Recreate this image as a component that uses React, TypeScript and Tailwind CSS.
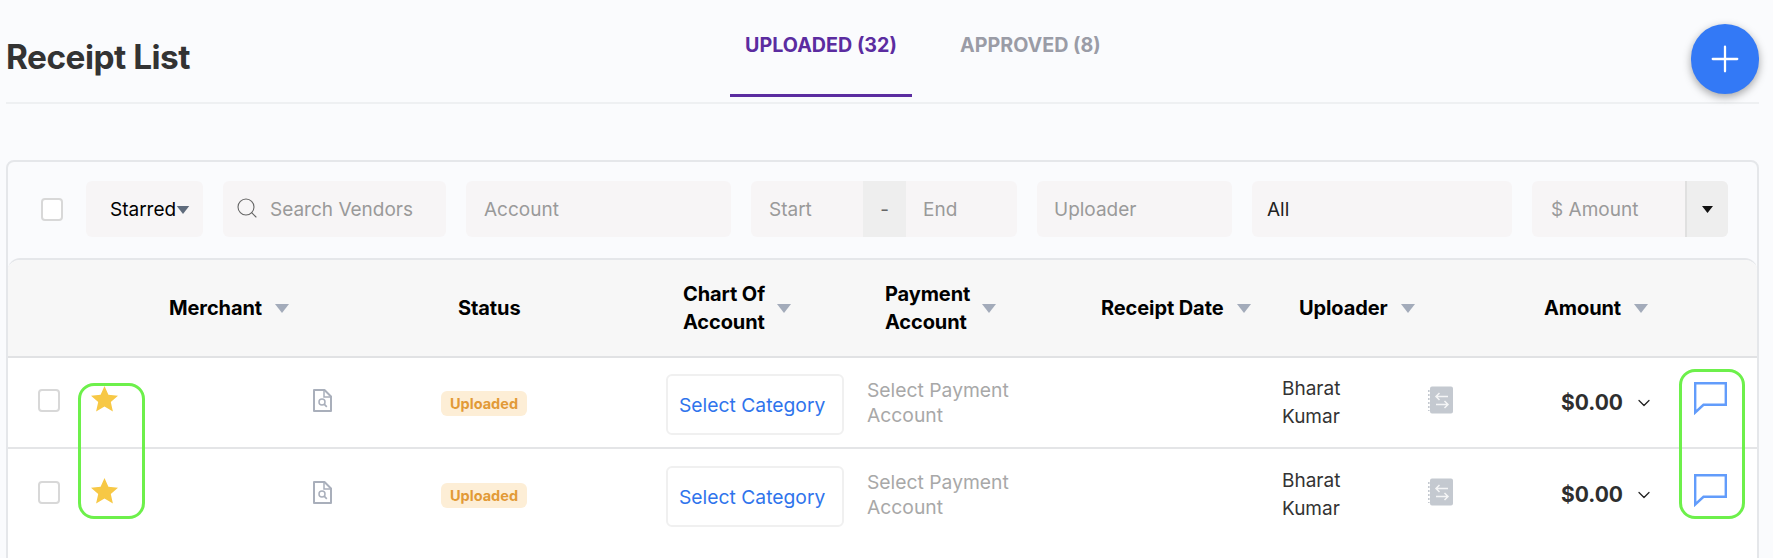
import { ChevronDown, Plus, Search } from "lucide-react";

const COLUMNS =
  "grid grid-cols-[70px_65px_298px_225px_201px_234px_181px_248px_150px_77px]";

function Caret({ className = "", color = "#a3abba" }: { className?: string; color?: string }) {
  return (
    <svg width="14" height="9" viewBox="0 0 14 9" className={className} aria-hidden="true">
      <path d="M0 0h14L7 9z" fill={color} />
    </svg>
  );
}

function Star() {
  return (
    <svg width="27" height="26" viewBox="0 0 27 26" aria-hidden="true">
      <path
        d="M13.5 0l3.9 8.7 9.6 1-7.2 6.3 2.1 9.5-8.4-4.9-8.4 4.9 2.1-9.5L0 9.7l9.6-1z"
        fill="#f7c845"
      />
    </svg>
  );
}

function DocSearch() {
  return (
    <svg width="19" height="23" viewBox="0 0 19 23" fill="none" aria-hidden="true">
      <path d="M1 1h10.5L18 7.5V22H1z" stroke="#a9afbb" strokeWidth="2" strokeLinejoin="round" />
      <path d="M11 1v7h7" stroke="#a9afbb" strokeWidth="1.5" />
      <circle cx="9" cy="13" r="3" stroke="#a9afbb" strokeWidth="1.5" />
      <path d="M11.2 15.2l2.6 2.6" stroke="#a9afbb" strokeWidth="1.7" />
    </svg>
  );
}

function Ledger() {
  return (
    <svg width="25" height="28" viewBox="0 0 25 28" fill="none" aria-hidden="true">
      <path d="M2 2.5A2 2 0 0 1 4 .5h19a2 2 0 0 1 2 2v23a2 2 0 0 1-2 2H4a2 2 0 0 1-2-2z" fill="#c4c9d0" />
      <path
        d="M0.8 4v2M0.8 8v2M0.8 12v2M0.8 16v2M0.8 20v2M0.8 24v1"
        stroke="#c4c9d0"
        strokeWidth="1.6"
      />
      <path
        d="M20 10.500H8M11.500 7L8 10.500l3.500 3.500M8 18.500h12M16.500 15l3.500 3.500-3.500 3.500"
        stroke="#f4f5f6"
        strokeWidth="1.500"
      />
    </svg>
  );
}

function Comment() {
  return (
    <svg width="33" height="33" viewBox="0 0 33 33" fill="none" aria-hidden="true">
      <path d="M1.200 1.200h30.600v21.600H9.500L1.200 30.500z" stroke="#629cfb" strokeWidth="2.400" />
    </svg>
  );
}

function HeaderLabel({ lines }: { lines: string[] }) {
  return (
    <div className="text-[20px] font-bold leading-[28px] tracking-[-0.1px] text-black">
      {lines.map((line) => (
        <div key={line} className="whitespace-nowrap">
          {line}
        </div>
      ))}
    </div>
  );
}

function FilterBox({ className = "", children }: { className?: string; children: React.ReactNode }) {
  return (
    <div className={`flex h-[56px] items-center overflow-hidden rounded-[6px] bg-[#f7f5f6] text-[19px] leading-[30px] ${className}`}>
      {children}
    </div>
  );
}

function ReceiptRow() {
  return (
    <div className={`${COLUMNS} h-[91px] items-center border-b-2 border-[#e4e5e7] bg-white`}>
      <div className="pb-[5px] pl-[30px]">
        <div className="h-[23px] w-[22px] rounded-[4px] border-2 border-[#d8d8d8] bg-white" />
      </div>
      <div className="pb-[8px] pl-[13px]">
        <Star />
      </div>
      <div className="pb-[5px] pl-[170px]">
        <DocSearch />
      </div>
      <div className="pt-[2px]">
        <span className="inline-flex h-[25px] w-[86px] items-center justify-center rounded-[6px] bg-[#fdeed6] text-[14.500px] font-bold text-[#e29a37]">
          Uploaded
        </span>
      </div>
      <div className="pt-[3px]">
        <div className="flex h-[61px] w-[178px] items-center whitespace-nowrap rounded-[6px] border-2 border-[#f0f0f0] bg-white pl-[11px] pt-[2px] text-[19.300px] text-[#2f74ec]">
          Select Category
        </div>
      </div>
      <div className="whitespace-nowrap text-[19.300px] leading-[25px] text-[#a8a8a8]">
        Select Payment
        <br />
        Account
      </div>
      <div />
      <div className="flex items-center">
        <div className="w-[146px] text-[19px] leading-[28px] text-[#333333]">
          Bharat
          <br />
          Kumar
        </div>
        <div className="pb-[5px]">
          <Ledger />
        </div>
      </div>
      <div className="flex items-center pl-[31px] pt-[1px]">
        <span className="text-[21px] font-bold text-[#2e2e2e]">$0.00</span>
        <ChevronDown size={20} strokeWidth={1.5} className="ml-[11px] text-[#222222]" />
      </div>
      <div className="pb-[9px] pl-[14px]">
        <Comment />
      </div>
    </div>
  );
}

export default function App() {
  return (
    <div className="h-[558px] overflow-hidden bg-[#fafbfd] pl-[6px] pr-[14px] font-['Inter',sans-serif]">
      {/* title + tabs */}
      <header className="flex h-[104px] border-b-2 border-[#eef0f2]">
        <h1 className="w-[724px] pt-[38px] text-[33.400px] font-bold leading-[38px] tracking-[-0.5px] text-[#333333]">
          Receipt List
        </h1>
        <div className="flex h-[97px] w-[182px] justify-center border-b-[3px] border-[#5b2ca0] pt-[33px] text-[19.700px] font-bold leading-[24px] text-[#5b2ca0]">
          UPLOADED (32)
        </div>
        <div className="ml-[48px] pt-[33px] text-[19.700px] font-bold leading-[24px] text-[#9a9ca6]">
          APPROVED (8)
        </div>
        <button className="ml-auto mt-[24px] flex h-[70px] w-[68px] items-center justify-center rounded-full bg-[#3379f6] shadow-[0_3px_8px_rgba(0,0,0,0.35)]">
          <Plus size={42} strokeWidth={1.3} className="text-white" />
        </button>
      </header>

      {/* filters + table */}
      <section className="mt-[56px] h-[500px] rounded-t-[8px] border-2 border-[#e5e7ea]">
        <div className="flex items-center gap-[20px] pl-[33px] pt-[19px]">
          <div className="mr-[3px] h-[23px] w-[22px] rounded-[4px] border-2 border-[#d8d8d8] bg-white" />
          <FilterBox className="w-[117px] pl-[24px] pt-[2px] text-black">
            Starred
            <Caret className="h-[8px] w-[14px] shrink-0" color="#5f6b7c" />
          </FilterBox>
          <FilterBox className="w-[223px] pl-[12px] pt-[2px] text-[#9a9a9a]">
            <Search size={24} strokeWidth={1.1} className="mb-[4px] mr-[11px] shrink-0 text-[#666666]" />
            Search Vendors
          </FilterBox>
          <FilterBox className="w-[265px] pl-[18px] pt-[2px] text-[#9a9a9a]">Account</FilterBox>
          <FilterBox className="w-[266px] text-[#9a9a9a]">
            <span className="w-[112px] pl-[18px] pt-[2px]">Start</span>
            <span className="flex h-full w-[43px] items-center justify-center bg-[#eeeeee] pt-[2px] text-[#666666]">-</span>
            <span className="pl-[17px] pt-[2px]">End</span>
          </FilterBox>
          <FilterBox className="w-[195px] pl-[17px] pt-[2px] text-[#9a9a9a]">Uploader</FilterBox>
          <FilterBox className="w-[260px] pl-[15px] pt-[2px] text-[#222222]">All</FilterBox>
          <FilterBox className="w-[196px] pl-[19px] text-[#9a9a9a]">
            <span className="w-[134px] whitespace-nowrap pt-[2px]">$ Amount</span>
            <span className="flex h-full flex-1 items-center justify-center border-l-2 border-[#e0e0e0] bg-[#eeeeee]">
              <svg width="11" height="7" viewBox="0 0 11 7" aria-hidden="true">
                <path d="M0 0h11L5.500 7z" fill="#111111" />
              </svg>
            </span>
          </FilterBox>
        </div>

        <div className="relative mt-[21px] h-[319px] overflow-hidden rounded-t-[12px] border-t-2 border-[#e5e7ea] bg-white">
          <div className={`${COLUMNS} h-[98px] items-center border-b-2 border-[#e1e2e4] bg-[#f7f7f7]`}>
            <div />
            <div />
            <div className="flex items-center gap-[13px] pl-[26px]">
              <HeaderLabel lines={["Merchant"]} />
              <Caret />
            </div>
            <div className="pl-[17px]">
              <HeaderLabel lines={["Status"]} />
            </div>
            <div className="flex items-center gap-[12px] pl-[17px]">
              <HeaderLabel lines={["Chart Of", "Account"]} />
              <Caret />
            </div>
            <div className="flex items-center gap-[12px] pl-[18px]">
              <HeaderLabel lines={["Payment", "Account"]} />
              <Caret />
            </div>
            <div className="flex items-center gap-[14px]">
              <HeaderLabel lines={["Receipt Date"]} />
              <Caret />
            </div>
            <div className="flex items-center gap-[13px] pl-[17px]">
              <HeaderLabel lines={["Uploader"]} />
              <Caret />
            </div>
            <div className="flex items-center gap-[13px] pl-[14px]">
              <HeaderLabel lines={["Amount"]} />
              <Caret />
            </div>
            <div />
          </div>
          <ReceiptRow />
          <div className="[&>div]:border-b-0">
            <ReceiptRow />
          </div>

          {/* green annotation outlines sit over the rows */}
          <div className="absolute left-[70px] top-[123px] h-[136px] w-[67px] rounded-[16px] border-[3px] border-[#6df04b]" />
          <div className="absolute left-[1671px] top-[109px] h-[150px] w-[66px] rounded-[16px] border-[3px] border-[#6df04b]" />
        </div>
      </section>
    </div>
  );
}
